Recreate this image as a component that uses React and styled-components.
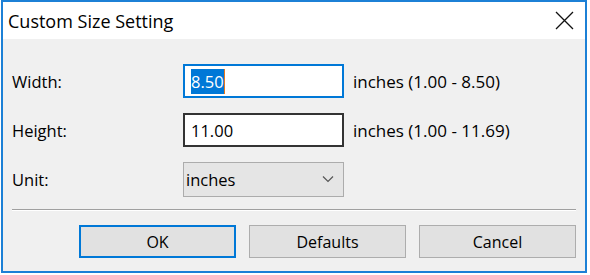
import React from 'react';
import styled, { createGlobalStyle } from 'styled-components';

const GlobalStyle = createGlobalStyle`
    body {
        margin: 0;
        background: #ffffff;
        font-family: "Open Sans", "Noto Sans", sans-serif;
    }
`;

const Window = styled.div`
    box-sizing: border-box;
    width: 586px;
    height: 273px;
    margin: 0 3px 2px 1px;
    border: 2px solid #1c80d6;
    background: #f0f0f0;
    display: flex;
    flex-direction: column;
`;

const TitleBar = styled.div`
    height: 37px;
    background: #ffffff;
    display: flex;
    align-items: center;
    justify-content: space-between;
    padding: 0 11px 0 5px;
`;

const Title = styled.span`
    font-size: 18px;
    color: #000;
`;

const Close = styled.div`
    width: 20px;
    height: 20px;
    display: flex;
    align-items: center;
    justify-content: center;
`;

const Body = styled.div`
    flex: 1;
    padding: 25px 9px 0 9px;
    display: flex;
    flex-direction: column;
`;

const Form = styled.div`
    display: grid;
    grid-template-columns: 171px 161px auto;
    grid-auto-rows: 34px;
    row-gap: 15px;
    align-items: center;
`;

const Label = styled.label`
    font-size: 16.5px;
    color: #000;
`;

const Field = styled.div`
    box-sizing: border-box;
    height: 34px;
    background: #ffffff;
    border: 2px solid ${p => (p.focused ? '#0078d7' : '#333333')};
    display: flex;
    align-items: center;
    padding-left: 6px;
    font-size: 16.5px;
    color: #000;
`;

const Selected = styled.span`
    background: #0078d7;
    color: #ffffff;
    padding: 1px 0;
    border-right: 1px solid #e8781e;
`;

const Suffix = styled.span`
    font-size: 17px;
    color: #000;
    padding-left: 9px;
    white-space: nowrap;
`;

const Select = styled.div`
    box-sizing: border-box;
    height: 35px;
    background: #e5e5e5;
    border: 1px solid #acacac;
    display: flex;
    align-items: center;
    justify-content: space-between;
    padding: 0 9px 0 2px;
    font-size: 16.5px;
    color: #000;
`;

const Separator = styled.div`
    margin-top: 13px;
    height: 1px;
    background: #a0a0a0;
    border-bottom: 1px solid #ffffff;
`;

const Buttons = styled.div`
    display: flex;
    justify-content: flex-end;
    gap: 13px;
    margin-top: 14px;
`;

const Button = styled.button`
    box-sizing: border-box;
    width: 157px;
    height: 33px;
    background: #e1e1e1;
    border: ${p => (p.primary ? '2px solid #0078d7' : '1px solid #adadad')};
    font-family: inherit;
    font-size: 16px;
    color: #000;
    padding: 0;
`;

export default function App() {
    return (
        <>
            <GlobalStyle />
            <Window>
                <TitleBar>
                    <Title>Custom Size Setting</Title>
                    <Close>
                        <svg width="19" height="19" viewBox="0 0 19 19">
                            <path d="M1 1 L18 18 M18 1 L1 18" stroke="#111" strokeWidth="1.3" fill="none" />
                        </svg>
                    </Close>
                </TitleBar>
                <Body>
                    <Form>
                        <Label>Width:</Label>
                        <Field focused>
                            <Selected>8.50</Selected>
                        </Field>
                        <Suffix>inches (1.00 - 8.50)</Suffix>

                        <Label>Height:</Label>
                        <Field>11.00</Field>
                        <Suffix>inches (1.00 - 11.69)</Suffix>

                        <Label>Unit:</Label>
                        <Select>
                            <span>inches</span>
                            <svg width="12" height="8" viewBox="0 0 12 8">
                                <polyline points="1,1.5 6,6.5 11,1.5" stroke="#555" strokeWidth="1.2" fill="none" />
                            </svg>
                        </Select>
                        <span />
                    </Form>
                    <Separator />
                    <Buttons>
                        <Button primary>OK</Button>
                        <Button>Defaults</Button>
                        <Button>Cancel</Button>
                    </Buttons>
                </Body>
            </Window>
        </>
    );
}
